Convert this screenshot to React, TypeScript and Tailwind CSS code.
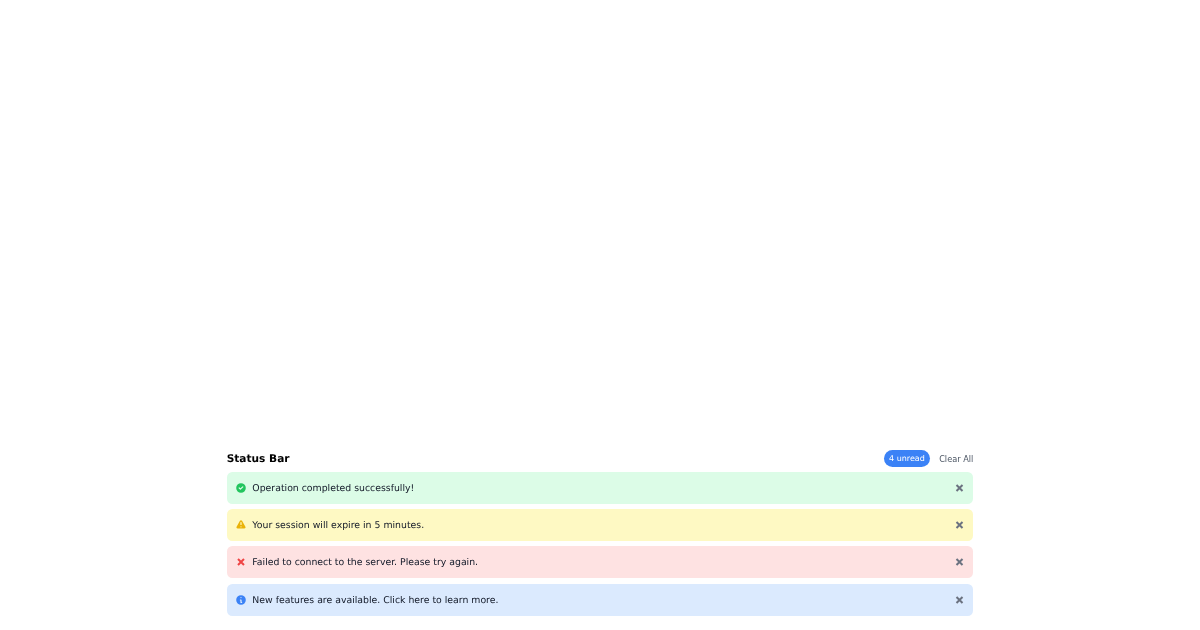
import { HiCheckCircle, HiExclamation, HiInformationCircle } from 'react-icons/hi'

function CloseIcon({ className }: { className: string }) {
  return (
    <svg viewBox="0 0 12 12" className={className} fill="none" stroke="currentColor" strokeWidth="2">
      <path d="M3 3 9 9M9 3 3 9" />
    </svg>
  )
}

const messages = [
  { id: 1, text: 'Operation completed successfully!', bg: 'bg-[#dcfce7]', Icon: HiCheckCircle, color: 'text-[#22c55e]' },
  { id: 2, text: 'Your session will expire in 5 minutes.', bg: 'bg-[#fef9c3]', Icon: HiExclamation, color: 'text-[#eab308]' },
  { id: 3, text: 'Failed to connect to the server. Please try again.', bg: 'bg-[#fee2e2]', Icon: CloseIcon, color: 'text-[#ef4444]' },
  { id: 4, text: 'New features are available. Click here to learn more.', bg: 'bg-[#dbeafe]', Icon: HiInformationCircle, color: 'text-[#3b82f6]' },
]

export default function App() {
  return (
    <div className="h-[630px] flex flex-col justify-end items-center pb-[14.33px] font-['DejaVu_Sans',sans-serif] [text-rendering:geometricPrecision] will-change-transform">
      <div className="w-[746.67px]">
        <div className="h-[17px] flex items-center justify-between mb-[5px]">
          <h2 className="text-[10.6px] font-bold text-black pt-[2.5px]">Status Bar</h2>
          <div className="flex items-center gap-[9px]">
            <span className="bg-[#3b82f6] text-white text-[8px] px-[5.33px] pt-[1px] rounded-full h-[17px] flex items-center">4 unread</span>
            <button className="text-[8.2px] text-[#4b5563] pt-[1.5px]">Clear All</button>
          </div>
        </div>
        <div className="flex flex-col gap-[5.33px]">
          {messages.map(({ id, text, bg, Icon, color }) => (
            <div key={id} className={`${bg} h-[32px] rounded-[5.33px] px-[8px] flex items-center justify-between`}>
              <div className="flex items-center gap-[5.33px]">
                <Icon className={`w-[12px] h-[12px] ${color}`} />
                <span className="text-[9.33px] text-[#111827] ml-[0.33px] pt-[1.67px]">{text}</span>
              </div>
              <CloseIcon className="w-[12px] h-[12px] text-[#6b7280] translate-x-[0.5px]" />
            </div>
          ))}
        </div>
      </div>
    </div>
  )
}
